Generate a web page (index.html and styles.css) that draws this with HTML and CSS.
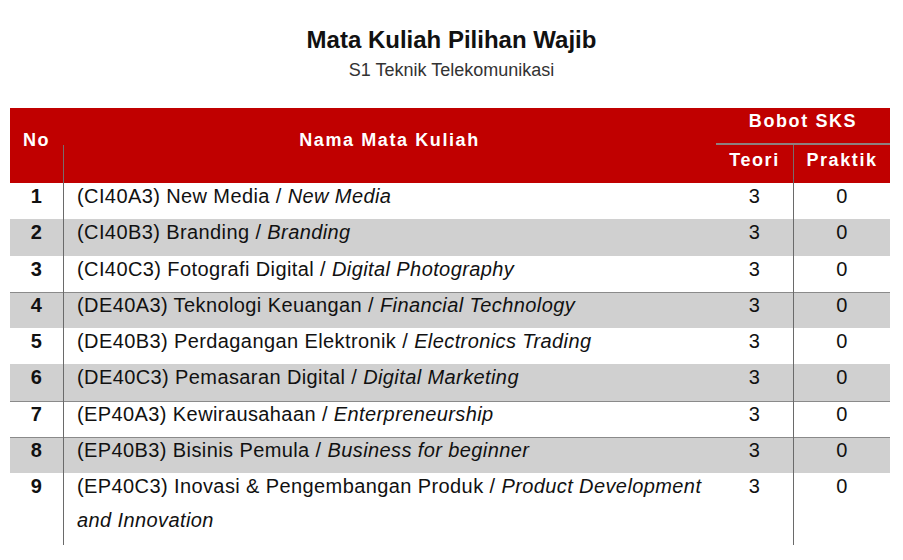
FILE: index.html
```html
<!DOCTYPE html>
<html lang="id">
<head>
<meta charset="utf-8">
<title>Mata Kuliah Pilihan Wajib</title>
<link rel="stylesheet" href="styles.css">
</head>
<body>
<header class="heading">
  <h1 class="title">Mata Kuliah Pilihan Wajib</h1>
  <p class="subtitle">S1 Teknik Telekomunikasi</p>
</header>
<section class="table">
  <div class="thead">
    <div class="h-no">No</div>
    <div class="h-name">Nama Mata Kuliah</div>
    <div class="h-bobot">Bobot SKS</div>
    <div class="h-teori">Teori</div>
    <div class="h-praktik">Praktik</div>
  </div>
  <div class="row">
    <div class="c-no">1</div><div class="c-name">(CI40A3) New Media / <em>New Media</em></div><div class="c-teori">3</div><div class="c-praktik">0</div>
  </div>
  <div class="row alt">
    <div class="c-no">2</div><div class="c-name">(CI40B3) Branding / <em>Branding</em></div><div class="c-teori">3</div><div class="c-praktik">0</div>
  </div>
  <div class="row">
    <div class="c-no">3</div><div class="c-name">(CI40C3) Fotografi Digital / <em>Digital Photography</em></div><div class="c-teori">3</div><div class="c-praktik">0</div>
  </div>
  <div class="row alt ruled">
    <div class="c-no">4</div><div class="c-name">(DE40A3) Teknologi Keuangan / <em>Financial Technology</em></div><div class="c-teori">3</div><div class="c-praktik">0</div>
  </div>
  <div class="row">
    <div class="c-no">5</div><div class="c-name">(DE40B3) Perdagangan Elektronik / <em>Electronics Trading</em></div><div class="c-teori">3</div><div class="c-praktik">0</div>
  </div>
  <div class="row alt">
    <div class="c-no">6</div><div class="c-name">(DE40C3) Pemasaran Digital / <em>Digital Marketing</em></div><div class="c-teori">3</div><div class="c-praktik">0</div>
  </div>
  <div class="row ruled">
    <div class="c-no">7</div><div class="c-name">(EP40A3) Kewirausahaan / <em>Enterpreneurship</em></div><div class="c-teori">3</div><div class="c-praktik">0</div>
  </div>
  <div class="row alt ruled">
    <div class="c-no">8</div><div class="c-name">(EP40B3) Bisinis Pemula / <em>Business for beginner</em></div><div class="c-teori">3</div><div class="c-praktik">0</div>
  </div>
  <div class="row tall">
    <div class="c-no">9</div><div class="c-name">(EP40C3) Inovasi &amp; Pengembangan Produk / <em>Product Development and Innovation</em></div><div class="c-teori">3</div><div class="c-praktik">0</div>
  </div>
</section>
</body>
</html>
```
FILE: styles.css
```css
html, body {
  margin: 0;
  padding: 0;
  background: #ffffff;
}

body {
  font-family: "Liberation Sans", Arial, sans-serif;
  color: #111111;
  width: 903px;
}

.heading {
  text-align: center;
  padding-top: 26px;
}

.title {
  margin: 0;
  font-size: 24px;
  line-height: 28px;
  font-weight: bold;
  color: #111111;
}

.subtitle {
  margin: 4px 0 0;
  font-size: 18px;
  line-height: 24px;
  color: #333333;
}

.table {
  margin: 26px 0 0 10px;
  width: 880px;
}

.thead {
  display: grid;
  grid-template-columns: 53px 653px 77px 97px;
  grid-template-rows: 37px 38px;
  background: #c00000;
  color: #ffffff;
  font-weight: bold;
  font-size: 18px;
  letter-spacing: 1.6px;
  text-align: center;
}

.h-no {
  grid-column: 1;
  grid-row: 1 / 3;
  line-height: 64px;
}

.h-name {
  grid-column: 2;
  grid-row: 1 / 3;
  line-height: 64px;
  position: relative;
}

.h-name::before {
  content: "";
  position: absolute;
  left: 0;
  top: 37px;
  bottom: 0;
  width: 1px;
  background: #7a6a6a;
}

.h-bobot {
  grid-column: 3 / 5;
  grid-row: 1;
  line-height: 26px;
  border-bottom: 2px solid #8e8080;
  box-sizing: border-box;
}

.h-teori {
  grid-column: 3;
  grid-row: 2;
  line-height: 30px;
}

.h-praktik {
  grid-column: 4;
  grid-row: 2;
  line-height: 30px;
  border-left: 1px solid #7a6a6a;
}

.row {
  display: grid;
  grid-template-columns: 53px 653px 77px 97px;
  height: 36.25px;
  box-sizing: border-box;
  font-size: 20px;
  letter-spacing: 0.4px;
  line-height: 34px;
}

.row.alt {
  background: #d0d0d0;
}

.row.ruled {
  border-top: 1px solid #8a8a8a;
}

.row.tall {
  height: 72px;
}

.row > div {
  margin-top: -4px;
}

.row.ruled > div {
  margin-top: -5px;
}

.c-no {
  font-weight: bold;
  text-align: center;
}

.c-name {
  border-left: 1px solid #6a6a6a;
  padding: 0 14px 0 13px;
}

.c-name em {
  font-style: italic;
}

.c-teori {
  text-align: center;
}

.c-praktik {
  text-align: center;
  border-left: 1px solid #6a6a6a;
}
```
